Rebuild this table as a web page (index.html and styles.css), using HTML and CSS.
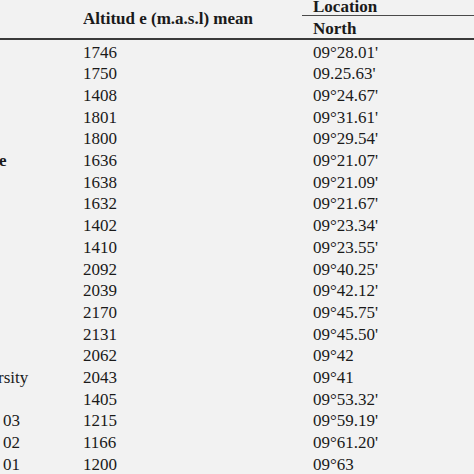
FILE: index.html
```html
<!DOCTYPE html>
<html>
<head>
<meta charset="utf-8">
<link rel="stylesheet" href="styles.css">
</head>
<body>
<table class="data">
  <colgroup>
    <col class="c-site">
    <col class="c-alt">
    <col class="c-loc">
  </colgroup>
  <thead>
    <tr class="h1">
      <th class="site" rowspan="2"></th>
      <th class="alt" rowspan="2">Altitud e (m.a.s.l) mean</th>
      <th class="loc">Location</th>
    </tr>
    <tr class="h2">
      <th class="loc">North</th>
    </tr>
  </thead>
  <tbody>
    <tr class="first"><td class="site"></td><td class="alt">1746</td><td class="loc">09°28.01'</td></tr>
    <tr><td class="site"></td><td class="alt">1750</td><td class="loc">09.25.63'</td></tr>
    <tr><td class="site"></td><td class="alt">1408</td><td class="loc">09°24.67'</td></tr>
    <tr><td class="site"></td><td class="alt">1801</td><td class="loc">09°31.61'</td></tr>
    <tr><td class="site"></td><td class="alt">1800</td><td class="loc">09°29.54'</td></tr>
    <tr><td class="site"><span class="cut-bold">e</span></td><td class="alt">1636</td><td class="loc">09°21.07'</td></tr>
    <tr><td class="site"></td><td class="alt">1638</td><td class="loc">09°21.09'</td></tr>
    <tr><td class="site"></td><td class="alt">1632</td><td class="loc">09°21.67'</td></tr>
    <tr><td class="site"></td><td class="alt">1402</td><td class="loc">09°23.34'</td></tr>
    <tr><td class="site"></td><td class="alt">1410</td><td class="loc">09°23.55'</td></tr>
    <tr><td class="site"></td><td class="alt">2092</td><td class="loc">09°40.25'</td></tr>
    <tr><td class="site"></td><td class="alt">2039</td><td class="loc">09°42.12'</td></tr>
    <tr><td class="site"></td><td class="alt">2170</td><td class="loc">09°45.75'</td></tr>
    <tr><td class="site"></td><td class="alt">2131</td><td class="loc">09°45.50'</td></tr>
    <tr><td class="site"></td><td class="alt">2062</td><td class="loc">09°42</td></tr>
    <tr><td class="site"><span class="cut">rsity</span></td><td class="alt">2043</td><td class="loc">09°41</td></tr>
    <tr><td class="site"></td><td class="alt">1405</td><td class="loc">09°53.32'</td></tr>
    <tr><td class="site"><span class="code">03</span></td><td class="alt">1215</td><td class="loc">09°59.19'</td></tr>
    <tr><td class="site"><span class="code">02</span></td><td class="alt">1166</td><td class="loc">09°61.20'</td></tr>
    <tr><td class="site"><span class="code">01</span></td><td class="alt">1200</td><td class="loc">09°63</td></tr>
  </tbody>
</table>
</body>
</html>
```

FILE: styles.css
```css
html, body {
  margin: 0;
  padding: 0;
  background: #f2f2f2;
  overflow: hidden;
  width: 474px;
  height: 474px;
}

.data {
  border-collapse: collapse;
  table-layout: fixed;
  width: 474px;
  margin-top: -2px;
  font-family: "Liberation Serif", "Times New Roman", serif;
  font-size: 17px;
  color: #1a1a1a;
}

.c-site { width: 83px; }
.c-alt { width: 219px; }
.c-loc { width: 172px; }

.data th,
.data td {
  padding: 0;
  text-align: left;
  white-space: nowrap;
  overflow: hidden;
}

.data th {
  font-weight: bold;
}

.h1 th {
  height: 17px;
  line-height: 17px;
  vertical-align: top;
}

.h1 th.loc {
  border-bottom: 1px solid #4a4a4a;
  padding-left: 11px;
}

.h1 th.alt {
  vertical-align: middle;
  border-bottom: 2px solid #3a3a3a;
}

.h1 th.site {
  border-bottom: 2px solid #3a3a3a;
}

.h2 th {
  padding-top: 3px;
  height: 19px;
  line-height: 19px;
  border-bottom: 2px solid #3a3a3a;
}

.h2 th.loc {
  padding-left: 11px;
}

.data tbody td {
  height: 21.7px;
  line-height: 21.7px;
}

.data tbody tr.first td {
  padding-top: 1.5px;
}

.data tbody td.loc {
  padding-left: 11px;
}

.cut {
  margin-left: -2px;
}

.cut-bold {
  font-weight: bold;
  margin-left: -1px;
}

.code {
  padding-left: 3px;
}
```
